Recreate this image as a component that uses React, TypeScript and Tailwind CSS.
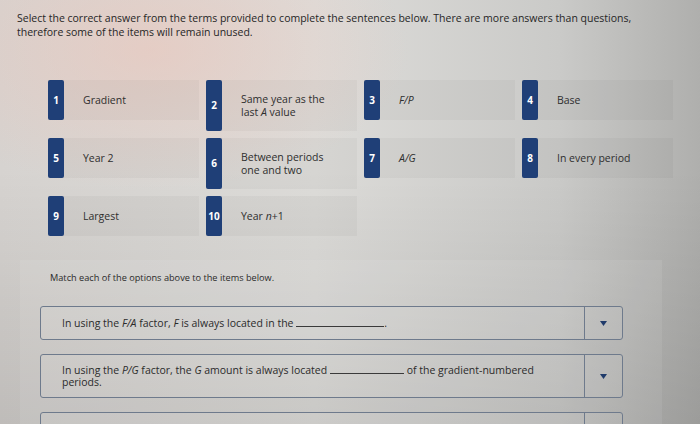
import type { ReactNode } from "react";

const TERMS: { n: number; label: ReactNode }[] = [
  { n: 1, label: "Gradient" },
  {
    n: 2,
    label: (
      <>
        Same year as the
        <br />
        last <i>A</i> value
      </>
    ),
  },
  { n: 3, label: <i>F/P</i> },
  { n: 4, label: "Base" },
  { n: 5, label: "Year 2" },
  {
    n: 6,
    label: (
      <>
        Between periods
        <br />
        one and two
      </>
    ),
  },
  { n: 7, label: <i>A/G</i> },
  { n: 8, label: "In every period" },
  { n: 9, label: "Largest" },
  {
    n: 10,
    label: (
      <>
        Year <i>n</i>+1
      </>
    ),
  },
];

function Blank({ width }: { width: string }) {
  return <span className={`inline-block border-b border-[#3a3a3a] align-baseline ${width}`} />;
}

function Caret() {
  return (
    <svg width="7" height="5" viewBox="0 0 7 5" aria-hidden>
      <path d="M0 0h7L3.5 5z" fill="#1f3a6a" />
    </svg>
  );
}

function MatchRow({ children, height }: { children?: ReactNode; height: string }) {
  return (
    <div className={`flex ${height} rounded-[3px] border border-[#6e7a8c] bg-white/[0.05]`}>
      <div className="flex flex-1 items-center pl-[21px] pr-4 text-[10.5px] leading-[12.5px] text-[#2b2b2b]">
        <div>{children}</div>
      </div>
      <div className="flex w-[38px] shrink-0 items-center justify-center border-l border-[#6e7a8c]">
        <Caret />
      </div>
    </div>
  );
}

export default function App() {
  return (
    <div
      className="relative h-[424px] w-[700px] overflow-hidden bg-[radial-gradient(ellipse_260px_140px_at_150px_50px,rgba(238,196,184,0.55),transparent),linear-gradient(180deg,transparent_40%,rgba(0,0,0,0.11)),linear-gradient(90deg,#d6d3d0,#dddcd9_45%,#cacac8_80%,#afafad)] text-[#2b2b2b]"
      style={{ fontFamily: "'Open Sans', Lato, sans-serif" }}
    >
      <p className="pl-[17px] pt-[11px] text-[10.5px] leading-[14px] text-[#262626]">
        Select the correct answer from the terms provided to complete the sentences below. There are more answers than
        questions,
        <br />
        therefore some of the items will remain unused.
      </p>

      {/* answer bank */}
      <div className="ml-[48px] mt-[41px] grid w-fit grid-cols-[repeat(4,151px)] items-start gap-x-[7px] gap-y-[7px]">
        {TERMS.map((t) => (
          <div key={t.n} className="flex items-stretch bg-black/[0.03]">
            <div className="flex w-4 shrink-0 items-center justify-center rounded-[2px] bg-[#1f3f77] text-[10px] font-bold text-white">
              {t.n}
            </div>
            <div className="flex min-h-[40px] items-center py-[13px] pl-[19px] text-[10.5px] leading-[12.5px] text-[#2e2e2e]">
              <span>{t.label}</span>
            </div>
          </div>
        ))}
      </div>

      {/* matching panel */}
      <div className="ml-5 mt-[24px] h-[200px] w-[642px] bg-white/[0.07] pt-[12px]">
        <p className="pl-[30px] text-[9.2px] leading-[12px] text-[#2b2b2b]">
          Match each of the options above to the items below.
        </p>
        <div className="ml-5 mt-[22px] flex w-[583px] flex-col gap-[14px]">
          <MatchRow height="h-[34px]">
            In using the <i>F/A</i> factor, <i>F</i> is always located in the <Blank width="w-[88px]" />.
          </MatchRow>
          <MatchRow height="h-[44px]">
            In using the <i>P/G</i> factor, the <i>G</i> amount is always located <Blank width="w-[74px]" /> of the
            gradient-numbered
            <br />
            periods.
          </MatchRow>
          <MatchRow height="h-[40px]" />
        </div>
      </div>
    </div>
  );
}
